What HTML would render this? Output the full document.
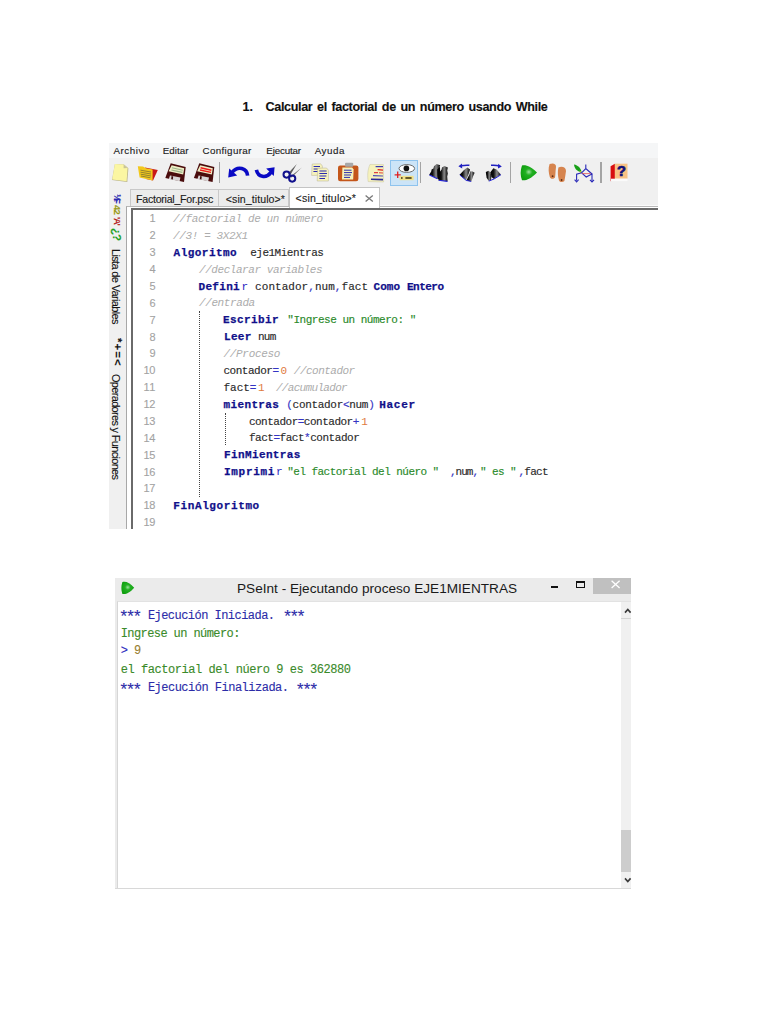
<!DOCTYPE html>
<html><head><meta charset="utf-8">
<style>
html,body{margin:0;padding:0;background:#fff;}
body{width:768px;height:1024px;position:relative;overflow:hidden;font-family:"Liberation Sans",sans-serif;}
.a{position:absolute;}
.t{position:absolute;white-space:pre;line-height:1;-webkit-text-stroke:0.12px currentColor;}
svg{position:absolute;left:0;top:0;}
</style></head>
<body>
<!-- screenshot 1 -->
<div class="a" style="left:109px;top:143px;width:549px;height:386px;background:#f0f0f0;"></div>
<div class="a" style="left:109px;top:143px;width:549px;height:15px;background:#f5f6f7;"></div>
<!-- highlight button -->
<div class="a" style="left:390px;top:160px;width:26px;height:24px;background:#cce4f7;border:1px solid #8ec3ee;"></div>
<!-- separators -->
<div class="a" style="left:219px;top:162px;width:1px;height:21px;background:#a4a4a4;"></div>
<div class="a" style="left:420px;top:162px;width:1px;height:21px;background:#a4a4a4;"></div>
<div class="a" style="left:510px;top:162px;width:1px;height:21px;background:#a4a4a4;"></div>
<div class="a" style="left:600px;top:162px;width:2px;height:21px;background:#a4a4a4;"></div>
<!-- tabs -->
<div class="a" style="left:130px;top:189px;width:89px;height:18px;background:#ececec;border:1px solid #c9c9c9;border-bottom:none;box-sizing:border-box;"></div>
<div class="a" style="left:219px;top:189px;width:70px;height:18px;background:#ececec;border:1px solid #c9c9c9;border-left:none;border-bottom:none;box-sizing:border-box;"></div>
<!-- editor frame -->
<div class="a" style="left:126px;top:206px;width:532px;height:323px;background:#fff;border-left:1px solid #a8a8a8;border-top:1px solid #b8b8b8;box-sizing:border-box;"></div>
<div class="a" style="left:289px;top:187px;width:91px;height:21px;background:#fff;border:1px solid #c4c4c4;border-bottom:none;box-sizing:border-box;"></div>
<div class="a" style="left:380px;top:205px;width:278px;height:1px;background:#fafafa;"></div>
<div class="a" style="left:131px;top:208px;width:527px;height:321px;background:#fff;border-left:2px solid #6a6a6a;border-top:2px solid #6a6a6a;box-sizing:border-box;"></div>
<div class="a" style="left:109px;top:529px;width:30px;height:1px;background:#fff;"></div>
<!-- indent guides -->
<div class="a" style="left:199px;top:311px;width:0;height:186px;border-left:1px dotted #444;"></div>
<div class="a" style="left:225px;top:413px;width:0;height:32px;border-left:1px dotted #444;"></div>

<!-- screenshot 2: console -->
<div class="a" style="left:115px;top:578px;width:516px;height:311px;background:#ebebeb;"></div>
<div class="a" style="left:117px;top:601px;width:514px;height:287px;background:#fff;border-left:1px solid #d6d6d6;border-top:1px solid #e2e2e2;box-sizing:border-box;"></div>
<div class="a" style="left:115px;top:888px;width:516px;height:1px;background:#d8d8d8;"></div>
<div class="a" style="left:593px;top:578px;width:38px;height:16px;background:#c0c0c0;"></div>
<div class="a" style="left:621px;top:602px;width:10px;height:286px;background:#f0f0f0;"></div>
<div class="a" style="left:621px;top:618px;width:10px;height:1px;background:#d4d4d4;"></div>
<div class="a" style="left:621px;top:830px;width:10px;height:42px;background:#cdcdcd;"></div>
<div class="a" style="left:551px;top:586px;width:7px;height:2px;background:#111;"></div>
<div class="a" style="left:576px;top:580.5px;width:9px;height:7.5px;border:1.3px solid #111;border-top-width:2px;box-sizing:border-box;"></div>

<div class="t" style="left:242.50px;top:101.33px;font-size:12.60px;color:#111;font-weight:bold;">1.</div>
<div class="t" style="left:265.60px;top:101.33px;font-size:12.60px;color:#111;font-weight:bold;letter-spacing:-0.375px;word-spacing:1.60px;">Calcular el factorial de un número usando While</div>
<div class="t" style="left:113.50px;top:146.30px;font-size:9.80px;color:#1b1b1b;letter-spacing:0.536px;">Archivo</div>
<div class="t" style="left:162.70px;top:146.30px;font-size:9.80px;color:#1b1b1b;letter-spacing:0.040px;">Editar</div>
<div class="t" style="left:202.50px;top:146.30px;font-size:9.80px;color:#1b1b1b;letter-spacing:0.349px;">Configurar</div>
<div class="t" style="left:266.30px;top:146.30px;font-size:9.80px;color:#1b1b1b;letter-spacing:-0.164px;">Ejecutar</div>
<div class="t" style="left:314.70px;top:146.30px;font-size:9.80px;color:#1b1b1b;letter-spacing:0.521px;">Ayuda</div>
<div class="t" style="left:136.00px;top:193.73px;font-size:10.60px;color:#1a1a1a;letter-spacing:-0.243px;">Factorial_For.psc</div>
<div class="t" style="left:225.80px;top:193.73px;font-size:10.60px;color:#1a1a1a;letter-spacing:0.071px;">&lt;sin_titulo&gt;*</div>
<div class="t" style="left:295.60px;top:192.83px;font-size:10.60px;color:#1a1a1a;letter-spacing:0.171px;">&lt;sin_titulo&gt;*</div>
<div class="t" style="left:149.50px;top:213.49px;font-size:11.00px;color:#a2a2a2;-webkit-text-stroke:0.1px currentColor;">1</div>
<div class="t" style="left:149.50px;top:230.36px;font-size:11.00px;color:#a2a2a2;-webkit-text-stroke:0.1px currentColor;">2</div>
<div class="t" style="left:149.50px;top:247.23px;font-size:11.00px;color:#a2a2a2;-webkit-text-stroke:0.1px currentColor;">3</div>
<div class="t" style="left:149.50px;top:264.10px;font-size:11.00px;color:#a2a2a2;-webkit-text-stroke:0.1px currentColor;">4</div>
<div class="t" style="left:149.50px;top:280.97px;font-size:11.00px;color:#a2a2a2;-webkit-text-stroke:0.1px currentColor;">5</div>
<div class="t" style="left:149.50px;top:297.84px;font-size:11.00px;color:#a2a2a2;-webkit-text-stroke:0.1px currentColor;">6</div>
<div class="t" style="left:149.50px;top:314.71px;font-size:11.00px;color:#a2a2a2;-webkit-text-stroke:0.1px currentColor;">7</div>
<div class="t" style="left:149.50px;top:331.58px;font-size:11.00px;color:#a2a2a2;-webkit-text-stroke:0.1px currentColor;">8</div>
<div class="t" style="left:149.50px;top:348.45px;font-size:11.00px;color:#a2a2a2;-webkit-text-stroke:0.1px currentColor;">9</div>
<div class="t" style="left:143.50px;top:365.32px;font-size:11.00px;color:#a2a2a2;letter-spacing:-0.332px;-webkit-text-stroke:0.1px currentColor;">10</div>
<div class="t" style="left:143.50px;top:382.19px;font-size:11.00px;color:#a2a2a2;letter-spacing:0.482px;-webkit-text-stroke:0.1px currentColor;">11</div>
<div class="t" style="left:143.50px;top:399.06px;font-size:11.00px;color:#a2a2a2;letter-spacing:-0.332px;-webkit-text-stroke:0.1px currentColor;">12</div>
<div class="t" style="left:143.50px;top:415.93px;font-size:11.00px;color:#a2a2a2;letter-spacing:-0.332px;-webkit-text-stroke:0.1px currentColor;">13</div>
<div class="t" style="left:143.50px;top:432.80px;font-size:11.00px;color:#a2a2a2;letter-spacing:-0.332px;-webkit-text-stroke:0.1px currentColor;">14</div>
<div class="t" style="left:143.50px;top:449.67px;font-size:11.00px;color:#a2a2a2;letter-spacing:-0.332px;-webkit-text-stroke:0.1px currentColor;">15</div>
<div class="t" style="left:143.50px;top:466.54px;font-size:11.00px;color:#a2a2a2;letter-spacing:-0.332px;-webkit-text-stroke:0.1px currentColor;">16</div>
<div class="t" style="left:143.50px;top:483.41px;font-size:11.00px;color:#a2a2a2;letter-spacing:-0.332px;-webkit-text-stroke:0.1px currentColor;">17</div>
<div class="t" style="left:143.50px;top:500.28px;font-size:11.00px;color:#a2a2a2;letter-spacing:-0.332px;-webkit-text-stroke:0.1px currentColor;">18</div>
<div class="t" style="left:143.50px;top:517.15px;font-size:11.00px;color:#a2a2a2;letter-spacing:-0.332px;-webkit-text-stroke:0.1px currentColor;">19</div>
<div class="t" style="left:173.10px;top:214.07px;font-size:11.00px;color:#acacac;font-family:'Liberation Mono',monospace;font-style:italic;letter-spacing:-0.366px;-webkit-text-stroke:0;">//factorial de un número</div>
<div class="t" style="left:173.10px;top:230.94px;font-size:11.00px;color:#acacac;font-family:'Liberation Mono',monospace;font-style:italic;letter-spacing:-0.383px;-webkit-text-stroke:0;">//3! = 3X2X1</div>
<div class="t" style="left:173.60px;top:247.81px;font-size:11.00px;color:#10108a;font-family:'Liberation Mono',monospace;font-weight:bold;letter-spacing:0.461px;-webkit-text-stroke:0.25px currentColor;">Algoritmo</div>
<div class="t" style="left:250.20px;top:247.81px;font-size:11.00px;color:#2a2a2a;font-family:'Liberation Mono',monospace;letter-spacing:-0.501px;-webkit-text-stroke:0.15px currentColor;">eje1Mientras</div>
<div class="t" style="left:199.00px;top:264.68px;font-size:11.00px;color:#acacac;font-family:'Liberation Mono',monospace;font-style:italic;letter-spacing:-0.443px;-webkit-text-stroke:0;">//declarar variables</div>
<div class="t" style="left:198.50px;top:281.55px;font-size:11.00px;color:#10108a;font-family:'Liberation Mono',monospace;font-weight:bold;letter-spacing:0.318px;-webkit-text-stroke:0.25px currentColor;">Defini</div>
<div class="t" style="left:241.50px;top:281.55px;font-size:11.00px;color:#1e1ec0;font-family:'Liberation Mono',monospace;-webkit-text-stroke:0;">r</div>
<div class="t" style="left:255.10px;top:281.55px;font-size:11.00px;color:#2a2a2a;font-family:'Liberation Mono',monospace;letter-spacing:0.042px;-webkit-text-stroke:0.15px currentColor;">contador<span style="color:#3434c4">,</span>num<span style="color:#3434c4">,</span>fact</div>
<div class="t" style="left:373.50px;top:281.55px;font-size:11.00px;color:#10108a;font-family:'Liberation Mono',monospace;font-weight:bold;letter-spacing:0.033px;-webkit-text-stroke:0.25px currentColor;">Como</div>
<div class="t" style="left:407.00px;top:281.55px;font-size:11.00px;color:#10108a;font-family:'Liberation Mono',monospace;font-weight:bold;letter-spacing:-0.522px;-webkit-text-stroke:0.25px currentColor;">Entero</div>
<div class="t" style="left:199.00px;top:298.42px;font-size:11.00px;color:#acacac;font-family:'Liberation Mono',monospace;font-style:italic;letter-spacing:-0.401px;-webkit-text-stroke:0;">//entrada</div>
<div class="t" style="left:223.10px;top:315.29px;font-size:11.00px;color:#10108a;font-family:'Liberation Mono',monospace;font-weight:bold;letter-spacing:0.384px;-webkit-text-stroke:0.25px currentColor;">Escribir</div>
<div class="t" style="left:287.30px;top:315.29px;font-size:11.00px;color:#2a8a2a;font-family:'Liberation Mono',monospace;letter-spacing:-0.481px;-webkit-text-stroke:0.15px currentColor;">&quot;Ingrese un número: &quot;</div>
<div class="t" style="left:224.00px;top:332.16px;font-size:11.00px;color:#10108a;font-family:'Liberation Mono',monospace;font-weight:bold;letter-spacing:0.283px;-webkit-text-stroke:0.25px currentColor;">Leer</div>
<div class="t" style="left:258.00px;top:332.16px;font-size:11.00px;color:#2a2a2a;font-family:'Liberation Mono',monospace;letter-spacing:-0.775px;-webkit-text-stroke:0.15px currentColor;">num</div>
<div class="t" style="left:223.50px;top:349.03px;font-size:11.00px;color:#acacac;font-family:'Liberation Mono',monospace;font-style:italic;letter-spacing:-0.314px;-webkit-text-stroke:0;">//Proceso</div>
<div class="t" style="left:223.50px;top:365.90px;font-size:11.00px;color:#2a2a2a;font-family:'Liberation Mono',monospace;letter-spacing:-0.489px;-webkit-text-stroke:0.15px currentColor;">contador<span style="color:#3434c4">=</span></div>
<div class="t" style="left:280.40px;top:365.90px;font-size:11.00px;color:#e07a40;font-family:'Liberation Mono',monospace;-webkit-text-stroke:0;">0</div>
<div class="t" style="left:293.80px;top:365.90px;font-size:11.00px;color:#acacac;font-family:'Liberation Mono',monospace;font-style:italic;letter-spacing:-0.512px;-webkit-text-stroke:0;">//contador</div>
<div class="t" style="left:223.50px;top:382.77px;font-size:11.00px;color:#2a2a2a;font-family:'Liberation Mono',monospace;letter-spacing:-0.025px;-webkit-text-stroke:0.15px currentColor;">fact<span style="color:#3434c4">=</span></div>
<div class="t" style="left:257.90px;top:382.77px;font-size:11.00px;color:#e07a40;font-family:'Liberation Mono',monospace;-webkit-text-stroke:0;">1</div>
<div class="t" style="left:275.90px;top:382.77px;font-size:11.00px;color:#acacac;font-family:'Liberation Mono',monospace;font-style:italic;letter-spacing:-0.674px;-webkit-text-stroke:0;">//acumulador</div>
<div class="t" style="left:223.50px;top:399.64px;font-size:11.00px;color:#10108a;font-family:'Liberation Mono',monospace;font-weight:bold;letter-spacing:0.370px;-webkit-text-stroke:0.25px currentColor;">mientras</div>
<div class="t" style="left:286.30px;top:399.64px;font-size:11.00px;color:#2a2a2a;font-family:'Liberation Mono',monospace;letter-spacing:-0.309px;-webkit-text-stroke:0.15px currentColor;"><span style="color:#3434c4">(</span>contador<span style="color:#3434c4">&lt;</span>num<span style="color:#3434c4">)</span></div>
<div class="t" style="left:379.20px;top:399.64px;font-size:11.00px;color:#10108a;font-family:'Liberation Mono',monospace;font-weight:bold;letter-spacing:0.725px;-webkit-text-stroke:0.25px currentColor;">Hacer</div>
<div class="t" style="left:248.90px;top:416.51px;font-size:11.00px;color:#2a2a2a;font-family:'Liberation Mono',monospace;letter-spacing:-0.495px;-webkit-text-stroke:0.15px currentColor;">contador<span style="color:#3434c4">=</span>contador<span style="color:#3434c4">+</span></div>
<div class="t" style="left:361.20px;top:416.51px;font-size:11.00px;color:#e07a40;font-family:'Liberation Mono',monospace;-webkit-text-stroke:0;">1</div>
<div class="t" style="left:248.90px;top:433.38px;font-size:11.00px;color:#2a2a2a;font-family:'Liberation Mono',monospace;letter-spacing:-0.472px;-webkit-text-stroke:0.15px currentColor;">fact<span style="color:#3434c4">=</span>fact<span style="color:#3434c4">*</span>contador</div>
<div class="t" style="left:224.00px;top:450.25px;font-size:11.00px;color:#10108a;font-family:'Liberation Mono',monospace;font-weight:bold;letter-spacing:0.379px;-webkit-text-stroke:0.25px currentColor;">FinMientras</div>
<div class="t" style="left:224.00px;top:467.12px;font-size:11.00px;color:#10108a;font-family:'Liberation Mono',monospace;font-weight:bold;letter-spacing:0.698px;-webkit-text-stroke:0.25px currentColor;">Imprimi</div>
<div class="t" style="left:275.90px;top:467.12px;font-size:11.00px;color:#1e1ec0;font-family:'Liberation Mono',monospace;-webkit-text-stroke:0;">r</div>
<div class="t" style="left:287.30px;top:467.12px;font-size:11.00px;color:#2a8a2a;font-family:'Liberation Mono',monospace;letter-spacing:-0.547px;-webkit-text-stroke:0.15px currentColor;">&quot;el factorial del núero &quot;</div>
<div class="t" style="left:450.00px;top:467.12px;font-size:11.00px;color:#2a2a2a;font-family:'Liberation Mono',monospace;letter-spacing:-1.000px;-webkit-text-stroke:0.15px currentColor;"><span style="color:#3434c4">,</span>num<span style="color:#3434c4">,</span></div>
<div class="t" style="left:480.00px;top:467.12px;font-size:11.00px;color:#2a8a2a;font-family:'Liberation Mono',monospace;letter-spacing:-0.602px;-webkit-text-stroke:0.15px currentColor;">&quot; es &quot;</div>
<div class="t" style="left:518.40px;top:467.12px;font-size:11.00px;color:#2a2a2a;font-family:'Liberation Mono',monospace;letter-spacing:-0.725px;-webkit-text-stroke:0.15px currentColor;"><span style="color:#3434c4">,</span>fact</div>
<div class="t" style="left:173.30px;top:500.86px;font-size:11.00px;color:#10108a;font-family:'Liberation Mono',monospace;font-weight:bold;letter-spacing:0.608px;-webkit-text-stroke:0.25px currentColor;">FinAlgoritmo</div>
<div class="t" style="left:121.01px;top:249.30px;font-size:11.00px;color:#111;transform-origin:0 0;transform:rotate(90deg);letter-spacing:-0.660px;">Lista de Variables</div>
<div class="t" style="left:120.81px;top:374.00px;font-size:11.00px;color:#111;transform-origin:0 0;transform:rotate(90deg);letter-spacing:-0.688px;">Operadores y Funciones</div>
<div class="t" style="left:123.33px;top:337.80px;font-size:11.50px;color:#111;transform-origin:0 0;transform:rotate(90deg);font-weight:bold;letter-spacing:0.993px;">*+=&lt;</div>
<div class="t" style="left:122.04px;top:204.90px;font-size:9.50px;color:#9a9a18;transform-origin:0 0;transform:rotate(90deg);font-weight:bold;letter-spacing:-0.864px;">42</div>
<div class="t" style="left:122.04px;top:217.00px;font-size:9.50px;color:#b42020;transform-origin:0 0;transform:rotate(90deg);font-weight:bold;letter-spacing:-1.341px;">&#x27;A&#x27;</div>
<div class="t" style="left:122.33px;top:228.00px;font-size:11.50px;color:#1ea01e;transform-origin:0 0;transform:rotate(90deg);font-weight:bold;letter-spacing:-1.053px;">¿?</div>
<div class="t" style="left:121.54px;top:193.80px;font-size:9.50px;color:#2a2ab0;transform-origin:0 0;transform:rotate(90deg);font-weight:bold;letter-spacing:-4.028px;">½F</div>
<div class="t" style="left:118.78px;top:610.42px;font-size:16.80px;color:#2c2ca8;font-family:'Liberation Mono',monospace;letter-spacing:-3.280px">***</div>
<div class="t" style="left:147.90px;top:609.50px;font-size:12.00px;color:#2c2ca8;font-family:'Liberation Mono',monospace;letter-spacing:-0.540px;">Ejecución Iniciada.</div>
<div class="t" style="left:282.48px;top:610.42px;font-size:16.80px;color:#2c2ca8;font-family:'Liberation Mono',monospace;letter-spacing:-3.280px">***</div>
<div class="t" style="left:120.70px;top:627.60px;font-size:12.00px;color:#3a8a2a;font-family:'Liberation Mono',monospace;letter-spacing:-0.584px;">Ingrese un número:</div>
<div class="t" style="left:120.70px;top:645.40px;font-size:12.00px;color:#2a2ac0;font-family:'Liberation Mono',monospace;">&gt;</div>
<div class="t" style="left:134.00px;top:645.40px;font-size:12.00px;color:#9a8030;font-family:'Liberation Mono',monospace;">9</div>
<div class="t" style="left:120.70px;top:663.55px;font-size:12.00px;color:#3a8a2a;font-family:'Liberation Mono',monospace;letter-spacing:-0.440px;">el factorial del núero 9 es 362880</div>
<div class="t" style="left:118.78px;top:682.62px;font-size:16.80px;color:#2c2ca8;font-family:'Liberation Mono',monospace;letter-spacing:-3.280px">***</div>
<div class="t" style="left:147.90px;top:681.70px;font-size:12.00px;color:#2c2ca8;font-family:'Liberation Mono',monospace;letter-spacing:-0.506px;">Ejecución Finalizada.</div>
<div class="t" style="left:295.28px;top:682.62px;font-size:16.80px;color:#2c2ca8;font-family:'Liberation Mono',monospace;letter-spacing:-3.280px">***</div>
<div class="t" style="left:237.00px;top:582.24px;font-size:13.60px;color:#1a1a1a;letter-spacing:0.013px;-webkit-text-stroke:0;">PSeInt - Ejecutando proceso EJE1MIENTRAS</div>
<svg width="768" height="1024" viewBox="0 0 768 1024">
<defs>
 <linearGradient id="bino" x1="0" y1="0" x2="1" y2="0">
  <stop offset="0" stop-color="#000"/><stop offset="0.3" stop-color="#111"/><stop offset="0.62" stop-color="#8a8a8a"/><stop offset="1" stop-color="#000"/>
 </linearGradient>
 <radialGradient id="playg" cx="0.5" cy="0.45" r="0.6">
  <stop offset="0" stop-color="#9ee09e"/><stop offset="0.35" stop-color="#22b022"/><stop offset="1" stop-color="#0c9c0c"/>
 </radialGradient>
</defs>
<!-- new doc -->
<path d="M114.9,164 L124,164.5 L128.4,168.2 L127.3,182 L112,180 Z" fill="#b9b48a"/>
<path d="M114.9,164 L123.6,164.4 L127.6,168 L126.6,181.2 L112.2,179.6 Z" fill="#fbf6a2"/>
<path d="M123.6,164.4 L127.6,168 L123.6,168.2 Z" fill="#c8c39a"/>
<!-- folder -->
<path d="M145,167.5 L157.8,170 L153,180.6 L146,179 Z" fill="#c81818"/>
<path d="M137.8,166.2 L143,166.6 L146,168.3 L152.6,169.6 L152.6,180.4 L139.6,177.4 Z" fill="#f2c81c"/>
<path d="M140.5,170.2 L151,172 M140.5,172.2 L151,174 M140.7,174.2 L151,176 M141,176 L150.5,177.8" stroke="#8a7a30" stroke-width="0.9"/>
<!-- floppy 1 -->
<g id="fl1">
<path d="M170.7,163.3 L185.7,166.9 L184,182 L165.3,178 Z" fill="#4a0c0c"/>
<path d="M171.6,165.3 L184.2,168.2 L183.2,174.4 L168.6,171.2 Z" fill="#eeeec6"/>
<path d="M172,167.8 L182.8,170.2 M171.4,170 L182.4,172.4" stroke="#9ab48a" stroke-width="1.1"/>
<path d="M170,175.4 L180.4,177.6 L179.6,181.2 L168.8,179 Z" fill="#d8d4d4"/>
<path d="M171.6,176 L173.2,176.4 L172.8,179.4 L171.2,179 Z" fill="#3a0a0a"/>
</g>
<!-- floppy 2 -->
<g transform="translate(28.6,0)">
<path d="M170.7,163.3 L185.7,166.9 L184,182 L165.3,178 Z" fill="#4a0c0c"/>
<path d="M171.6,165.3 L184.2,168.2 L183.2,174.4 L168.6,171.2 Z" fill="#eeeec6"/>
<path d="M172,167.8 L182.8,170.2 M171.4,170 L182.4,172.4" stroke="#ee1a1a" stroke-width="1.4"/>
<path d="M170,175.4 L180.4,177.6 L179.6,181.2 L168.8,179 Z" fill="#d8d4d4"/>
<path d="M171.6,176 L173.2,176.4 L172.8,179.4 L171.2,179 Z" fill="#3a0a0a"/>
</g>
<!-- undo -->
<path d="M247.6,175.6 C247,168.5 238,165 232,172.5" stroke="#0a0ac4" stroke-width="3.6" fill="none"/>
<path d="M228.2,177.6 L229.2,168.6 L237.2,175.6 Z" fill="#0a0ac4"/>
<!-- redo -->
<path d="M256.4,169.8 C258,177 266,179 271,172.4" stroke="#0a0ac4" stroke-width="3.6" fill="none"/>
<path d="M274.6,167.2 L266.2,168.4 L273.8,176 Z" fill="#0a0ac4"/>
<!-- scissors -->
<path d="M288.2,173.2 L296.8,164 L290.6,174.6 Z" fill="#5a5a5a"/><path d="M290.4,176.4 L301.8,167.6 L291.6,177.6 Z" fill="#6a6a6a"/>
<circle cx="286.6" cy="174.6" r="3.1" stroke="#10108c" stroke-width="2" fill="none"/>
<circle cx="292.2" cy="178.6" r="3.1" stroke="#10108c" stroke-width="2" fill="none"/>
<!-- copy -->
<path d="M312.2,164 L320.6,163.8 L322.4,166 L322,175.2 L311.6,175.4 Z" fill="#f6f2bc" stroke="#b4b090" stroke-width="0.5"/>
<path d="M313.6,166.5 L320,166.5 M313.6,169 L320.5,169 M313.4,171.5 L319.6,171.5" stroke="#2a2ab0" stroke-width="1"/>
<path d="M317.6,168.2 L326.6,168 L328.6,170.4 L328.4,181 L317.2,181 Z" fill="#f6f2bc" stroke="#b4b090" stroke-width="0.5"/>
<path d="M319.4,171 L326.6,171 M319.4,173.5 L327,173.5 M319.4,176 L326.4,176 M319.4,178.5 L325,178.5" stroke="#2a2ab0" stroke-width="1"/>
<!-- paste -->
<rect x="338" y="165.4" width="20.4" height="15.8" rx="2.2" fill="#c4561a"/>
<rect x="345" y="162.8" width="8.2" height="4" rx="1" fill="#a8a8a8"/>
<path d="M342.4,167.6 L352.2,167.4 L353.6,169.6 L353.2,179.6 L342,179.6 Z" fill="#f6f2bc"/>
<path d="M344,170.2 L351.5,170.2 M344,172.6 L352,172.6 M344,175 L351,175 M344,177.4 L350,177.4" stroke="#2a2ab0" stroke-width="1"/>
<!-- list -->
<path d="M370,164.4 L383.4,164.6 L383.6,182 L368.2,181.6 C367.4,176 367.4,170 370,164.4 Z" fill="#f6f2bc" stroke="#c8c4a0" stroke-width="0.5"/>
<path d="M375.6,166.6 L383,166.6" stroke="#3a3ab0" stroke-width="1.2"/>
<path d="M377.6,169.6 L383,170.2" stroke="#e02020" stroke-width="1.3"/>
<path d="M374,172.6 L378,172.6 M379,172.8 L383,173" stroke="#e04040" stroke-width="1.1"/>
<path d="M373,175.6 L383,176" stroke="#4a4ab8" stroke-width="1.1"/>
<path d="M371,179.2 L383,179.6" stroke="#2a2a9a" stroke-width="1.6"/>
<!-- eye button -->
<ellipse cx="406.8" cy="168.5" rx="7.8" ry="3.9" fill="#fff" stroke="#6a6a6a" stroke-width="1"/>
<circle cx="406.4" cy="168.4" r="2.8" fill="#111"/>
<path d="M397.7,171.6 L397.7,178 M394.6,174.8 L400.8,174.8" stroke="#e02020" stroke-width="1.3"/>
<rect x="399.6" y="175.8" width="14" height="4.4" fill="#f0e08a"/>
<path d="M401,178 L402.6,178 M405.4,178 L411.6,178" stroke="#3a3010" stroke-width="1.3"/>
<!-- binoculars 1 -->
<path d="M429.2,174.8 L431.2,171.6 L431.6,169.4 L433.4,168.4 L434,166.2 L436.6,164 L440.2,165.2 L438.8,169 L437.4,178.8 Z" fill="url(#bino)"/>
<path d="M437.2,169.5 L440,166.5 L440.2,179.4 L437.4,178.8 Z" fill="#050505"/>
<path d="M438.4,180.2 L439,176 L439.4,172.4 L441.6,169.6 L442,167.4 L444.4,166 L447.8,167.6 L447.2,170.6 L447.8,173.4 L447.2,176.4 L447.6,181.4 Z" fill="url(#bino)"/>
<path d="M429.4,175 L437.4,178.8 M438.6,180.3 L447.4,181.4" stroke="#2424d8" stroke-width="1.1" fill="none"/>
<!-- binoculars 2 -->
<path d="M461,165.8 C464,165.2 467,165 469.4,165.3" stroke="#2020c0" stroke-width="1.5" fill="none"/>
<path d="M458.4,166.2 L462,163.6 L462.2,168.4 Z" fill="#2020c0"/>
<path d="M459.6,174.8 L463.6,170.6 L465.6,168.8 L467.4,167.4 L470,169.4 L468.6,174 L466,180 Z" fill="url(#bino)"/>
<path d="M466.4,180.4 L469.4,174.6 L470.4,171.2 L472.6,171.6 L474.6,172.8 L473,176.4 L471.4,181.4 Z" fill="url(#bino)"/>
<path d="M459.8,175 L466.2,180.4 L471.2,181.4" stroke="#2424d8" stroke-width="1" fill="none"/>
<!-- binoculars 3 -->
<path d="M491,165.3 C494.5,165 497.5,165.4 499.6,166" stroke="#2020c0" stroke-width="1.5" fill="none"/>
<path d="M501.8,166.4 L498.2,163.8 L498,168.6 Z" fill="#2020c0"/>
<path d="M485.8,172 L488.6,170.8 L490.4,172.2 L491.4,176 L491,180 L488.8,181 L486.6,177.8 Z" fill="url(#bino)"/>
<path d="M490.6,172 L493.4,168.2 L496.6,169.6 L500.8,174.6 L494,179 L491.4,177 Z" fill="url(#bino)"/>
<path d="M488.8,181.1 L494,179 L500.9,174.8" stroke="#2424d8" stroke-width="1" fill="none"/>
<!-- play -->
<path d="M522,165.4 C526,164.4 531,166.6 537,172.4 C531,178.6 526,180.8 522,180.2 C520.2,175.4 520.2,170.2 522,165.4 Z" fill="url(#playg)"/>
<!-- feet -->
<path d="M549.6,164 C553,162.6 556.4,163.6 556,167 C555.4,171 555.6,174.6 555,177.4 C553.6,179.4 550.4,179.2 549.8,177 C548.6,173 548,168 549.6,164 Z" fill="#d6844e"/>
<path d="M558.4,167.4 C562,166 566,167.2 566,171 C565.6,174.4 565,177.6 564.4,181 C563,182.6 559.8,182.4 559,180.4 C557.8,176.4 557.4,171.4 558.4,167.4 Z" fill="#d6844e"/>
<circle cx="552.6" cy="176.2" r="0.9" fill="#5a2a10"/><circle cx="561.6" cy="180" r="0.9" fill="#5a2a10"/>
<!-- diagram -->
<path d="M574,164.4 C578,165 581,168 581.6,172.2 C578,171.8 574.4,169 574,164.4 Z" fill="#18a018"/>
<path d="M579.6,170.6 L581.8,172.6 L580.2,173.4 Z" fill="#e8e820"/>
<path d="M581.6,172.8 L585.8,168.6 L592,174 L586.2,177 Z M585.8,168.6 L585.8,164.6 M576.6,180.8 L576.6,174.2 L581.6,172.8 M592,174 L592,181" stroke="#2a2ab8" stroke-width="1.1" fill="none"/>
<path d="M582,173.6 L590.6,173.6" stroke="#e05050" stroke-width="0.8"/>
<path d="M574.6,179.6 L576.6,182 L578.6,179.6 M590,179.8 L592,182 L594,179.8" stroke="#2a2ab8" stroke-width="1.1" fill="none"/>
<!-- help -->
<path d="M610.6,166.2 L614.9,163.8 L614.9,180 L610.6,181.2 Z" fill="#d80e0e"/>
<rect x="614.9" y="163.7" width="12.6" height="15" fill="#f8c284"/>
<rect x="611" y="178.7" width="16.5" height="2.4" fill="#fafafa"/>
<text x="617" y="176.4" font-family="Liberation Sans" font-weight="bold" font-size="14.6" fill="#10107a" stroke="#10107a" stroke-width="0.7">?</text>
<!-- tab close X -->
<path d="M365.6,195.4 L372.8,201.6 M372.8,195.4 L365.6,201.6" stroke="#7a7a7a" stroke-width="1.3"/>
<!-- console play icon -->
<path d="M122.4,582 C126,581 129.5,582.6 134.2,587.8 C129.5,593 126,594.6 122.4,594 C121,590 121,586 122.4,582 Z" fill="url(#playg)"/>
<!-- close X white -->
<path d="M611.6,580.8 L619.6,588 M619.6,580.8 L611.6,588" stroke="#fff" stroke-width="1.3"/>
<!-- scroll arrows -->
<path d="M625,612.6 L627.8,609.4 L630.6,612.6" stroke="#3a3a3a" stroke-width="1.6" fill="none"/>
<path d="M625,878.4 L627.8,881.6 L630.6,878.4" stroke="#3a3a3a" stroke-width="1.6" fill="none"/>
</svg>

</body></html>
